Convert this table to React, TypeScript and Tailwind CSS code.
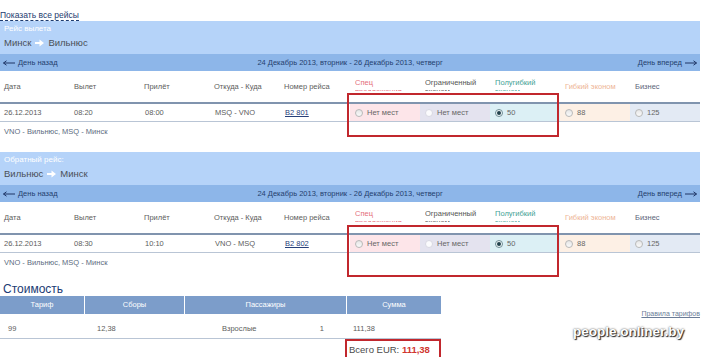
import React from 'react';

type Fare = {
  label: string[];
  labelClass: string;
  cellClass: string;
  value: string;
  selected?: boolean;
  disabled?: boolean;
};

type Flight = {
  title: string;
  from: string;
  to: string;
  date: string;
  dep: string;
  arr: string;
  route: string;
  number: string;
  legendClass: string;
};

const fares: Fare[] = [
  { label: ['Спец', 'предложения'], labelClass: 'text-[#e4707c]', cellClass: 'bg-[#fde5e9]', value: 'Нет мест' },
  { label: ['Ограниченный', 'эконом'], labelClass: 'text-[#555]', cellClass: 'bg-[#e4e3ef]', value: 'Нет мест', disabled: true },
  { label: ['Полугибкий', 'эконом'], labelClass: 'text-[#3f9f95]', cellClass: 'bg-[#dcf0f5]', value: '50', selected: true },
  { label: ['Гибкий эконом'], labelClass: 'text-[#eeb596]', cellClass: 'bg-[#fdf0e5]', value: '88' },
  { label: ['Бизнес'], labelClass: 'text-[#5a6478]', cellClass: 'bg-[#e3eaf4]', value: '125' },
];

const flights: Flight[] = [
  {
    title: 'Рейс вылета',
    from: 'Минск',
    to: 'Вильнюс',
    date: '26.12.2013',
    dep: '08:20',
    arr: '08:00',
    route: 'MSQ - VNO',
    number: 'B2 801',
    legendClass: 'h-[30px]',
  },
  {
    title: 'Обратный рейс:',
    from: 'Вильнюс',
    to: 'Минск',
    date: '26.12.2013',
    dep: '08:30',
    arr: '10:10',
    route: 'VNO - MSQ',
    number: 'B2 802',
    legendClass: 'h-[29px]',
  },
];

const infoHeaders = ['Дата', 'Вылет', 'Прилёт', 'Откуда - Куда', 'Номер рейса'];

function CityArrow() {
  return (
    <svg width="9" height="8" viewBox="0 0 9 8" className="mx-[4px]">
      <polygon points="0,3 4.5,3 4.5,0.5 9,4 4.5,7.5 4.5,5 0,5" fill="#ffffff" />
    </svg>
  );
}

function LongArrow({ dir }: { dir: 'left' | 'right' }) {
  return (
    <svg width="12" height="6" viewBox="0 0 12 6">
      {dir === 'left' ? (
        <path d="M0.5 3 H12 M0.5 3 L3.5 0.8 M0.5 3 L3.5 5.2" stroke="#1f3565" strokeWidth="1" fill="none" />
      ) : (
        <path d="M0 3 H11.5 M11.5 3 L8.5 0.8 M11.5 3 L8.5 5.2" stroke="#1f3565" strokeWidth="1" fill="none" />
      )}
    </svg>
  );
}

function Radio({ selected, disabled }: { selected?: boolean; disabled?: boolean }) {
  if (selected) {
    return (
      <span className="flex h-[8px] w-[8px] items-center justify-center rounded-full border border-[#6f8f96] bg-[#eef6f7]">
        <span className="h-[4px] w-[4px] rounded-full bg-[#22424c]" />
      </span>
    );
  }
  return (
    <span
      className={
        disabled
          ? 'h-[8px] w-[8px] rounded-full border border-[#d8d8e2] bg-[#fbfbfd]'
          : 'h-[8px] w-[8px] rounded-full border border-[#b9b9b9] bg-gradient-to-b from-[#e6e6e6] to-[#fafafa]'
      }
    />
  );
}

function FlightBlock({ flight }: { flight: Flight }) {
  return (
    <div className="flex flex-col">
      {/* blue panel */}
      <div className="h-[33px] bg-[#b5d3f9] px-[4px] pt-[3px]">
        <div className="text-[8px] leading-[10px] text-white">{flight.title}</div>
        <div className="mt-[3px] flex items-center text-[9.5px] leading-[12px] text-[#4a4f57]">
          {flight.from}
          <CityArrow />
          {flight.to}
        </div>
      </div>
      <div className="grid h-[17px] grid-cols-[1fr_auto_1fr] items-center bg-[#8db6e9] px-[3px] text-[7.5px] text-[#24406e]">
        <div className="flex items-center gap-[3px]">
          <LongArrow dir="left" />
          День назад
        </div>
        <div>24 Декабрь 2013, вторник - 26 Декабрь 2013, четверг</div>
        <div className="flex items-center justify-end gap-[3px]">
          День вперед
          <LongArrow dir="right" />
        </div>
      </div>

      {/* headers */}
      <div className="flex h-[31px] items-center text-[7.5px] text-[#5c5c5c]">
        {infoHeaders.map((h) => (
          <div key={h} className="w-[70px] pl-[4px]">
            {h}
          </div>
        ))}
        {fares.map((f) =>
          f.label.length > 1 ? (
            <div
              key={f.label[0]}
              className={`h-[31px] w-[70px] self-start pl-[5px] pt-[7px] leading-[9px] ${f.labelClass}`}
            >
              <div className="h-[13px] overflow-hidden">
                <div>{f.label[0]}</div>
                <div>{f.label[1]}</div>
              </div>
            </div>
          ) : (
            <div key={f.label[0]} className={`w-[70px] pl-[5px] ${f.labelClass}`}>
              {f.label[0]}
            </div>
          ),
        )}
      </div>

      {/* row */}
      <div className="h-[2px] bg-[#8094ae]" />
      <div className="flex h-[17px] items-center text-[7.5px] text-[#5c5c5c]">
        <div className="w-[70px] pl-[4px]">{flight.date}</div>
        <div className="w-[70px] pl-[4px]">{flight.dep}</div>
        <div className="w-[70px] pl-[5px]">{flight.arr}</div>
        <div className="w-[70px] pl-[5px]">{flight.route}</div>
        <div className="w-[70px] pl-[5px]">
          <span className="text-[#27407a] underline">{flight.number}</span>
        </div>
        {fares.map((f) => (
          <div
            key={f.label[0]}
            className={`flex h-full w-[70px] items-center gap-[4px] pl-[5px] ${f.cellClass}`}
          >
            <Radio selected={f.selected} disabled={f.disabled} />
            <span className="text-[#666]">{f.value}</span>
          </div>
        ))}
      </div>
      <div className="h-[1px] bg-[#b9c5d5]" />
      <div className={`pl-[4px] pt-[5px] text-[7.5px] leading-[10px] text-[#5d6b80] ${flight.legendClass}`}>
        VNO - Вильнюс, MSQ - Минск
      </div>
    </div>
  );
}

export default function App() {
  return (
    <div className="relative h-[357px] w-[710px] overflow-hidden bg-white font-['Liberation_Sans',Arial,sans-serif]">
      <div className="w-[700px]">
        <div className="h-[21px] pt-[8px] leading-[10px]">
          <span className="inline-block border-b border-dashed border-[#1d3b6f] text-[8.5px] leading-[9px] text-[#1d3b6f]">
            Показать все рейсы
          </span>
        </div>

        {flights.map((f) => (
          <FlightBlock key={f.number} flight={f} />
        ))}

        {/* cost */}
        <div className="h-[14px] pl-[3px] text-[12px] leading-[14px] text-[#1b3a73]">Стоимость</div>
        <div className="flex">
          <div className="flex w-[441px] flex-col">
            <div className="flex h-[18px] bg-[#7c9dca] text-[7.5px] text-white">
              <div className="flex w-[85px] items-center justify-center border-r border-white">Тариф</div>
              <div className="flex w-[100px] items-center justify-center border-r border-white">Сборы</div>
              <div className="flex w-[162px] items-center justify-center border-r border-white">Пассажиры</div>
              <div className="flex flex-1 items-center justify-center">Сумма</div>
            </div>
            <div className="flex h-[24px] items-center pt-[6px] text-[7.5px] text-[#5c5c5c]">
              <div className="w-[85px] pl-[8px]">99</div>
              <div className="w-[100px] pl-[12px]">12,38</div>
              <div className="flex w-[162px] pl-[37px]">
                <span>Взрослые</span>
                <span className="ml-auto mr-[23px]">1</span>
              </div>
              <div className="flex-1 pl-[6px]">111,38</div>
            </div>
            <div className="h-[1px] bg-[#b9c5d5]" />
            <div className="flex">
              <div className="ml-[345px] h-[22px] w-[96px] border-2 border-[#c1272d] pl-[2px] pt-[3px] text-[9.5px] leading-[12px] text-[#4a4a4a]">
                Всего EUR: <span className="font-bold text-[#d0362f]">111,38</span>
              </div>
            </div>
          </div>
          <div className="flex flex-1 justify-end pt-[13px]">
            <span className="h-[10px] text-[7px] leading-[10px] text-[#6b7c97] underline">Правила тарифов</span>
          </div>
        </div>
      </div>

      {/* annotation boxes */}
      <div className="absolute left-[347px] top-[93px] h-[44px] w-[212px] border-2 border-[#c1272d]" />
      <div className="absolute left-[347px] top-[225px] h-[52px] w-[212px] border-2 border-[#c1272d]" />

      {/* watermark */}
      <div className="absolute left-[573px] top-[324px] text-[13.5px] font-bold leading-[16px] text-white [text-shadow:1px_1px_1px_#222,0_0_2px_#333]">
        people.onliner.by
      </div>
    </div>
  );
}
